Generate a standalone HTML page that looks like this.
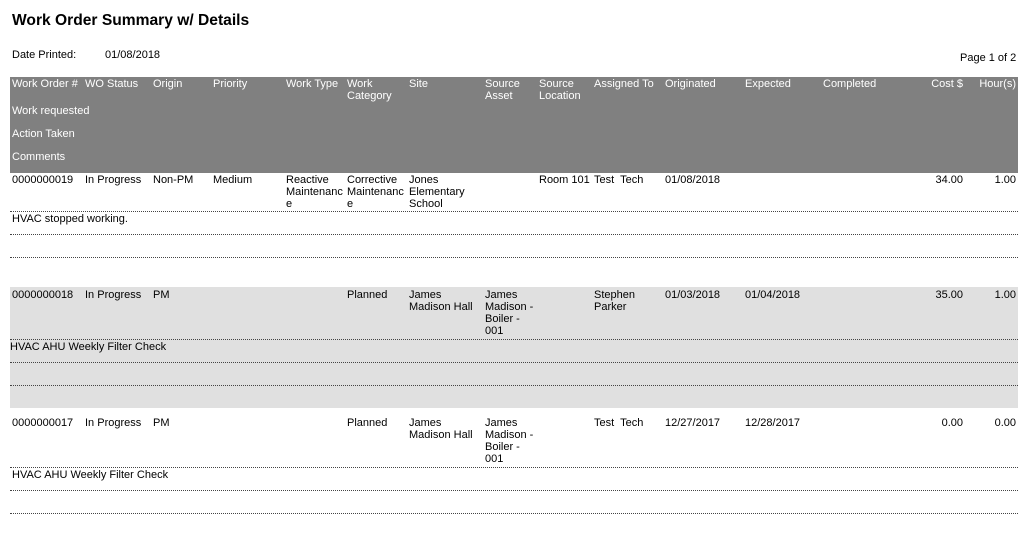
<!DOCTYPE html>
<html><head><meta charset="utf-8"><style>
body{margin:0;width:1028px;height:536px;background:#fff;position:relative;overflow:hidden;font-family:"Liberation Sans",Arial,sans-serif;font-size:11px;color:#000;line-height:12px}
div{position:absolute;white-space:nowrap;margin-top:1px}
.t{font-weight:bold;font-size:15.6px;left:12px;top:11px;line-height:18px}
.h{color:#fff}
.dl{left:10px;width:1008px;height:0;border-top:1px dotted #444;margin-top:0}
.bg{margin-top:0}
.r{text-align:right}
</style></head><body>
<div class="t">Work Order Summary w/ Details</div>
<div style="left:12px;top:48px">Date Printed:</div>
<div style="left:105px;top:48px">01/08/2018</div>
<div style="left:960px;top:51px">Page 1 of 2</div>

<div class="bg" style="left:10px;top:77px;width:1008px;height:96px;background:#808080"></div>
<div class="h" style="left:12px;top:77px">Work Order #</div>
<div class="h" style="left:85px;top:77px">WO Status</div>
<div class="h" style="left:153px;top:77px">Origin</div>
<div class="h" style="left:213px;top:77px">Priority</div>
<div class="h" style="left:286px;top:77px">Work Type</div>
<div class="h" style="left:347px;top:77px">Work<br>Category</div>
<div class="h" style="left:409px;top:77px">Site</div>
<div class="h" style="left:485px;top:77px">Source<br>Asset</div>
<div class="h" style="left:539px;top:77px">Source<br>Location</div>
<div class="h" style="left:594px;top:77px">Assigned To</div>
<div class="h" style="left:665px;top:77px">Originated</div>
<div class="h" style="left:745px;top:77px">Expected</div>
<div class="h" style="left:823px;top:77px">Completed</div>
<div class="h r" style="right:65px;top:77px">Cost $</div>
<div class="h r" style="right:12px;top:77px">Hour(s)</div>
<div class="h" style="left:12px;top:104px">Work requested</div>
<div class="h" style="left:12px;top:127px">Action Taken</div>
<div class="h" style="left:12px;top:150px">Comments</div>

<!-- row 1 -->
<div style="left:12px;top:173px">0000000019</div>
<div style="left:85px;top:173px">In Progress</div>
<div style="left:153px;top:173px">Non-PM</div>
<div style="left:213px;top:173px">Medium</div>
<div style="left:286px;top:173px">Reactive<br>Maintenanc<br>e</div>
<div style="left:347px;top:173px">Corrective<br>Maintenanc<br>e</div>
<div style="left:409px;top:173px">Jones<br>Elementary<br>School</div>
<div style="left:539px;top:173px">Room 101</div>
<div style="left:594px;top:173px">Test&nbsp; Tech</div>
<div style="left:665px;top:173px">01/08/2018</div>
<div class="r" style="right:65px;top:173px">34.00</div>
<div class="r" style="right:12px;top:173px">1.00</div>
<div class="dl" style="top:211px"></div>
<div style="left:12px;top:212px">HVAC stopped working.</div>
<div class="dl" style="top:234px"></div>
<div class="dl" style="top:257px"></div>

<!-- row 2 -->
<div class="bg" style="left:10px;top:287px;width:1008px;height:121px;background:#e0e0e0"></div>
<div style="left:12px;top:288px">0000000018</div>
<div style="left:85px;top:288px">In Progress</div>
<div style="left:153px;top:288px">PM</div>
<div style="left:347px;top:288px">Planned</div>
<div style="left:409px;top:288px">James<br>Madison Hall</div>
<div style="left:485px;top:288px">James<br>Madison -<br>Boiler -<br>001</div>
<div style="left:594px;top:288px">Stephen<br>Parker</div>
<div style="left:665px;top:288px">01/03/2018</div>
<div style="left:745px;top:288px">01/04/2018</div>
<div class="r" style="right:65px;top:288px">35.00</div>
<div class="r" style="right:12px;top:288px">1.00</div>
<div class="dl" style="top:339px"></div>
<div style="left:10px;top:340px">HVAC AHU Weekly Filter Check</div>
<div class="dl" style="top:362px"></div>
<div class="dl" style="top:385px"></div>

<!-- row 3 -->
<div style="left:12px;top:416px">0000000017</div>
<div style="left:85px;top:416px">In Progress</div>
<div style="left:153px;top:416px">PM</div>
<div style="left:347px;top:416px">Planned</div>
<div style="left:409px;top:416px">James<br>Madison Hall</div>
<div style="left:485px;top:416px">James<br>Madison -<br>Boiler -<br>001</div>
<div style="left:594px;top:416px">Test&nbsp; Tech</div>
<div style="left:665px;top:416px">12/27/2017</div>
<div style="left:745px;top:416px">12/28/2017</div>
<div class="r" style="right:65px;top:416px">0.00</div>
<div class="r" style="right:12px;top:416px">0.00</div>
<div class="dl" style="top:467px"></div>
<div style="left:12px;top:468px">HVAC AHU Weekly Filter Check</div>
<div class="dl" style="top:490px"></div>
<div class="dl" style="top:513px"></div>
</body></html>
